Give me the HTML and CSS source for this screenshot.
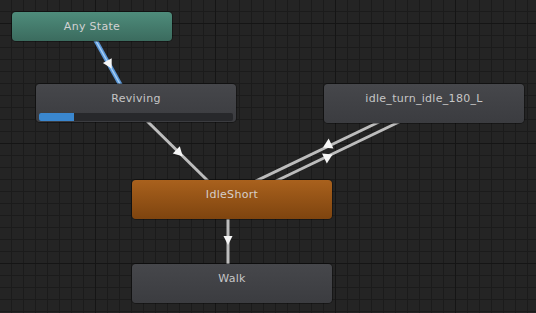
FILE: index.html
```html
<!DOCTYPE html>
<html>
<head>
<meta charset="utf-8">
<link rel="stylesheet" href="styles.css">
</head>
<body>
<div class="canvas">
  <svg class="edges" width="536" height="313" viewBox="0 0 536 313">
    <line class="edge-blue" x1="93.2" y1="36" x2="122.2" y2="88"/>
    <line class="edge-blue-core" x1="93.2" y1="36" x2="122.2" y2="88"/>
    <line class="edge" x1="146" y1="120" x2="209" y2="182"/>
    <line class="edge" x1="254" y1="182" x2="381" y2="121"/>
    <line class="edge" x1="274" y1="182" x2="401" y2="121"/>
    <line class="edge" x1="228" y1="217" x2="228" y2="266"/>
    <polygon class="arrow" points="-4.5,-5 4.5,0 -4.5,5" transform="translate(109.5 64.5) rotate(60.8)"/>
    <polygon class="arrow" points="-4.5,-5 4.5,0 -4.5,5" transform="translate(179.5 153) rotate(44.5)"/>
    <polygon class="arrow" points="-4.5,-5.5 4.5,0 -4.5,5.5" transform="translate(327 145.5) rotate(154.4)"/>
    <polygon class="arrow" points="-4.5,-5.5 4.5,0 -4.5,5.5" transform="translate(328.5 156.5) rotate(-25.6)"/>
    <polygon class="arrow" points="-4.5,-4.5 4.5,0 -4.5,4.5" transform="translate(228 240.5) rotate(90)"/>
  </svg>
  <div class="node node-any any-state">Any State</div>
  <div class="node node-gray reviving">
    <div class="title">Reviving</div>
    <div class="progress"><div class="progress-fill" style="width:35px"></div></div>
  </div>
  <div class="node node-gray idle-turn"><div class="title">idle_turn_idle_180_L</div></div>
  <div class="node node-orange idle-short"><div class="title">IdleShort</div></div>
  <div class="node node-gray walk"><div class="title">Walk</div></div>
</div>
</body>
</html>
```

FILE: styles.css
```css
html, body {
  margin: 0;
  padding: 0;
  background: #222222;
}

.canvas {
  position: relative;
  width: 536px;
  height: 313px;
  overflow: hidden;
  background-color: #242424;
  background-image:
    linear-gradient(to right, transparent 95px, #151515 95px, #151515 96px, transparent 96px),
    linear-gradient(to bottom, transparent 23px, #151515 23px, #151515 24px, transparent 24px),
    linear-gradient(to right, transparent 11px, #1b1b1b 11px),
    linear-gradient(to bottom, transparent 11px, #1b1b1b 11px);
  background-size: 120px 120px, 120px 120px, 12px 12px, 12px 12px;
  font-family: "DejaVu Sans", sans-serif;
}

.edges {
  position: absolute;
  left: 0;
  top: 0;
}

.edge {
  stroke: #bdbdbd;
  stroke-width: 3;
}

.edge-blue {
  stroke: #5b97d8;
  stroke-width: 4.5;
}

.edge-blue-core {
  stroke: #a8d0f4;
  stroke-width: 1.5;
}

.arrow {
  fill: #f6f6f6;
}

.node {
  position: absolute;
  box-sizing: border-box;
  border-radius: 4px;
  font-size: 11px;
  letter-spacing: 0.3px;
  color: #c6c6c6;
  text-align: center;
  box-shadow: 0 0 0 1px rgba(0, 0, 0, 0.35);
}

.title {
  height: 28px;
  line-height: 29px;
}

.node-any {
  background: linear-gradient(to bottom, #4e8c7b, #3b6b5e);
  color: #d2d2d2;
  line-height: 29px;
}

.node-gray {
  background: linear-gradient(to bottom, #46474b, #3b3c40);
}

.node-orange {
  background: linear-gradient(to bottom, #a9611d, #7e440f);
  color: #d6cfc8;
}

.any-state {
  left: 12px;
  top: 12px;
  width: 160px;
  height: 29px;
}

.reviving {
  left: 36px;
  top: 84px;
  width: 200px;
  height: 38px;
}

.idle-turn {
  left: 324px;
  top: 84px;
  width: 200px;
  height: 39px;
}

.idle-short {
  left: 132px;
  top: 180px;
  width: 200px;
  height: 39px;
}

.walk {
  left: 132px;
  top: 264px;
  width: 200px;
  height: 39px;
}

.progress {
  margin: 1px 3px 0;
  height: 8px;
  border-radius: 2px;
  background: #27282b;
  overflow: hidden;
}

.progress-fill {
  height: 100%;
  background: #3a87cf;
}
```
